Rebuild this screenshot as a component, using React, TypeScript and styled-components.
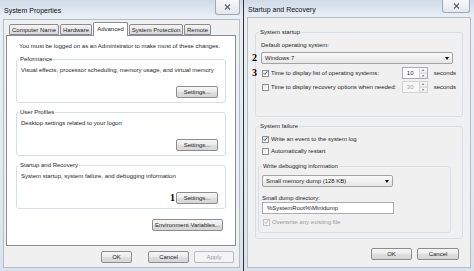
import React from "react";
import styled, { createGlobalStyle } from "styled-components";

const GlobalStyle = createGlobalStyle`
  *, *::before, *::after { box-sizing: border-box; }
  html, body { margin: 0; padding: 0; background: #fff; }
  body {
    font-family: "Liberation Sans", Arial, sans-serif;
    font-size: 6px;
    color: #1e1e1e;
  }
`;

const Screen = styled.div`
  display: flex;
  gap: 1px;
  width: 474px;
  height: 271px;
  overflow: hidden;
  background: #2e3236;
`;

const Window = styled.div<{ $width: number }>`
  width: ${(p) => p.$width}px;
  height: 271px;
  display: flex;
  flex-direction: column;
  background: linear-gradient(180deg, #cfdbe7 0%, #e8eef4 6%, #e4eaf1 60%, #d9e2eb 100%);
`;

const TitleBar = styled.div<{ $height: number }>`
  height: ${(p) => p.$height}px;
  display: flex;
  align-items: center;
  justify-content: space-between;
  padding-left: 4px;
  position: relative;
`;

const Title = styled.span`
  font-size: 7px;
  color: #111;
  margin-top: 1px;
`;

const CloseButton = styled.div<{ $width: number; $height: number; $right: number }>`
  align-self: flex-start;
  width: ${(p) => p.$width}px;
  height: ${(p) => p.$height}px;
  margin-right: ${(p) => p.$right}px;
  border: 1px solid #9eaab7;
  border-top: none;
  border-radius: 0 0 3px 3px;
  background: linear-gradient(180deg, #f5f7f9 0%, #e3e8ee 100%);
  display: flex;
  align-items: center;
  justify-content: center;
`;

const Client = styled.div`
  flex: 1;
  margin: 0 3px 3px 3px;
  background: #f0f0f0;
  border: 1px solid #b4bec9;
  display: flex;
  flex-direction: column;
`;

/* ---------- left dialog ---------- */

const LeftBody = styled.div`
  display: flex;
  flex-direction: column;
  padding: 1px 0 0 2px;
`;

const TabRow = styled.div`
  display: flex;
  align-items: flex-end;
  gap: 1px;
  height: 14px;
  padding-left: 3px;
`;

const Tab = styled.div<{ $width: number; $active?: boolean }>`
  width: ${(p) => p.$width}px;
  height: ${(p) => (p.$active ? 14 : 11)}px;
  border: 1px solid #898c95;
  border-bottom: ${(p) => (p.$active ? "none" : "1px solid #898c95")};
  border-radius: 2px 2px 0 0;
  background: ${(p) =>
    p.$active ? "#fff" : "linear-gradient(180deg, #f4f4f4 0%, #e8e8e8 50%, #dadada 100%)"};
  margin-bottom: ${(p) => (p.$active ? -1 : 0)}px;
  position: relative;
  z-index: ${(p) => (p.$active ? 1 : 0)};
  display: flex;
  align-items: center;
  justify-content: center;
  white-space: nowrap;
  padding-bottom: ${(p) => (p.$active ? 2 : 0)}px;
`;

const TabPanel = styled.div`
  width: 230px;
  height: 211px;
  background: #fff;
  border: 1px solid #898c95;
  display: flex;
  flex-direction: column;
  gap: 5px;
  padding: 6px 9px 0 9px;
`;

const Text = styled.div<{ $indent?: number; $muted?: boolean }>`
  line-height: 8px;
  white-space: nowrap;
  margin-left: ${(p) => p.$indent ?? 0}px;
  color: ${(p) => (p.$muted ? "#8a8a8a" : "inherit")};
`;

const Group = styled.fieldset`
  margin: 0;
  padding: 0 7px 4px 4px;
  border: 1px solid #d5dfe5;
  border-radius: 3px;
  display: flex;
  flex-direction: column;
  min-inline-size: 0;
`;

const Legend = styled.legend`
  padding: 0 1px;
  margin-left: -2px;
  line-height: 8px;
  white-space: nowrap;
`;

const GroupText = styled(Text)`
  margin-top: 3px;
`;

const ButtonRow = styled.div`
  display: flex;
  justify-content: flex-end;
  align-items: center;
  margin-top: 12px;
`;

const Button = styled.button<{ $width: number }>`
  width: ${(p) => p.$width}px;
  height: 12px;
  padding: 0;
  font-family: "Liberation Sans", Arial, sans-serif;
  font-size: 6px;
  line-height: 10px;
  color: #1e1e1e;
  border: 1px solid #8d8d8d;
  border-radius: 2px;
  background: linear-gradient(180deg, #f6f6f6 0%, #ebebeb 50%, #dedede 51%, #d6d6d6 100%);
  &:disabled {
    color: #9a9a9a;
    border-color: #b8bcbf;
    background: #f4f4f4;
  }
`;

const EnvButton = styled(Button)`
  align-self: flex-end;
  margin: 5px 3px 0 0;
`;

const Marker = styled.span`
  font-family: "Liberation Serif", "Times New Roman", serif;
  font-weight: bold;
  font-size: 10px;
  line-height: 10px;
  color: #000;
`;

const StepMarker = styled(Marker)`
  margin-right: 1px;
`;

const Footer = styled.div<{ $top: number; $right: number }>`
  display: flex;
  justify-content: flex-end;
  gap: 5px;
  padding: ${(p) => p.$top}px ${(p) => p.$right}px 0 0;
`;

const NarrowOk = styled(Button)`
  margin-right: 11px;
`;

/* ---------- right dialog ---------- */

const RightBody = styled.div`
  display: flex;
  flex-direction: column;
  padding: 10px 7px 0 7px;
`;

const Section = styled.fieldset<{ $height: number; $gapTop?: number }>`
  margin: ${(p) => p.$gapTop ?? 0}px 0 0 0;
  height: ${(p) => p.$height}px;
  padding: 0 6px 0 5px;
  border: 1px solid #d5dfe5;
  border-radius: 3px;
  display: flex;
  flex-direction: column;
  min-inline-size: 0;
`;

const SubGroup = styled.fieldset`
  margin: 7px 5px 0 -3px;
  height: 71px;
  padding: 0 3px 0 3px;
  border: 1px solid #d5dfe5;
  border-radius: 3px;
  display: flex;
  flex-direction: column;
  min-inline-size: 0;
`;

const SubLegend = styled(Legend)`
  margin-left: 0;
`;

const Row = styled.div<{ $top: number }>`
  display: flex;
  align-items: center;
  margin-top: ${(p) => p.$top}px;
  position: relative;
`;

const SideMarker = styled(Marker)`
  position: absolute;
  left: -9px;
  top: 50%;
  transform: translateY(-50%);
`;

const Combo = styled.div<{ $width: number }>`
  width: ${(p) => p.$width}px;
  height: 12px;
  border: 1px solid #a3a3a3;
  border-radius: 2px;
  background: linear-gradient(180deg, #fafafa 0%, #f0f0f0 50%, #e6e6e6 100%);
  display: flex;
  align-items: center;
  justify-content: space-between;
  padding: 0 3px 0 3px;
  line-height: 8px;
`;

const ComboArrow = styled.span`
  width: 0;
  height: 0;
  border-left: 2.5px solid transparent;
  border-right: 2.5px solid transparent;
  border-top: 3px solid #111;
`;

const CheckLine = styled.label<{ $width?: number; $disabled?: boolean }>`
  display: flex;
  align-items: center;
  gap: 2px;
  width: ${(p) => (p.$width ? `${p.$width}px` : "auto")};
  line-height: 8px;
  white-space: nowrap;
  color: ${(p) => (p.$disabled ? "#9a9a9a" : "inherit")};
  margin-left: 1px;
`;

const Box = styled.span<{ $disabled?: boolean }>`
  width: 7px;
  height: 7px;
  flex: none;
  border: 1px solid ${(p) => (p.$disabled ? "#c4c4c4" : "#8e8f8f")};
  background: ${(p) => (p.$disabled ? "#f4f4f4" : "linear-gradient(135deg, #e6e6e6 0%, #fff 100%)")};
  display: flex;
  align-items: center;
  justify-content: center;
`;

const Spin = styled.div<{ $disabled?: boolean }>`
  width: 26px;
  height: 12px;
  border: 1px solid ${(p) => (p.$disabled ? "#d2d2d2" : "#abadb3")};
  background: ${(p) => (p.$disabled ? "#f7f7f7" : "#fff")};
  color: ${(p) => (p.$disabled ? "#a0a0a0" : "inherit")};
  display: flex;
  align-items: center;
  justify-content: space-between;
  padding-left: 4px;
  margin-right: 6px;
`;

const SpinButtons = styled.div`
  width: 8px;
  height: 10px;
  display: flex;
  flex-direction: column;
  border-left: 1px solid #d8d8d8;
`;

const SpinHalf = styled.div<{ $down?: boolean }>`
  flex: 1;
  display: flex;
  align-items: center;
  justify-content: center;
  background: linear-gradient(180deg, #f8f8f8, #e8e8e8);
  border-top: ${(p) => (p.$down ? "1px solid #dcdcdc" : "none")};
  &::after {
    content: "";
    border-left: 1.5px solid transparent;
    border-right: 1.5px solid transparent;
    ${(p) => (p.$down ? "border-top: 2px solid #7a7a7a;" : "border-bottom: 2px solid #7a7a7a;")}
  }
`;

const TextBox = styled.div<{ $width: number }>`
  width: ${(p) => p.$width}px;
  height: 12px;
  border: 1px solid #abadb3;
  background: #fff;
  padding-left: 4px;
  display: flex;
  align-items: center;
  line-height: 8px;
  white-space: nowrap;
`;

const CloseGlyph = () => (
  <svg width="7" height="6" viewBox="0 0 7 6">
    <path d="M1 0.5 L6 5.5 M6 0.5 L1 5.5" stroke="#58626d" strokeWidth="1.1" fill="none" />
  </svg>
);

const Check: React.FC<{ checked?: boolean; disabled?: boolean }> = ({ checked, disabled }) => (
  <Box $disabled={disabled}>
    {checked && (
      <svg width="6" height="6" viewBox="0 0 6 6">
        <path
          d="M0.8 3.2 L2.3 4.8 L5.3 0.8"
          stroke={disabled ? "#b0b0b0" : "#3a4d6b"}
          strokeWidth="1.1"
          fill="none"
        />
      </svg>
    )}
  </Box>
);

const SpinBox: React.FC<{ value: string; disabled?: boolean }> = ({ value, disabled }) => (
  <Spin $disabled={disabled}>
    {value}
    <SpinButtons>
      <SpinHalf />
      <SpinHalf $down />
    </SpinButtons>
  </Spin>
);

const tabs = [
  { label: "Computer Name", width: 50 },
  { label: "Hardware", width: 32 },
  { label: "Advanced", width: 35, active: true },
  { label: "System Protection", width: 54 },
  { label: "Remote", width: 27 },
];

const App: React.FC = () => {
  return (
    <>
      <GlobalStyle />
      <Screen>
        <Window $width={243}>
          <TitleBar $height={19}>
            <Title>System Properties</Title>
            <CloseButton $width={25} $height={15} $right={3}>
              <CloseGlyph />
            </CloseButton>
          </TitleBar>
          <Client>
            <LeftBody>
              <TabRow>
                {tabs.map((t) => (
                  <Tab key={t.label} $width={t.width} $active={t.active}>
                    {t.label}
                  </Tab>
                ))}
              </TabRow>
              <TabPanel>
                <Text $indent={3}>
                  You must be logged on as an Administrator to make most of these changes.
                </Text>
                <Group>
                  <Legend>Peformance</Legend>
                  <GroupText>Visual effects, processor scheduling, memory usage, and virtual memory</GroupText>
                  <ButtonRow>
                    <Button $width={42}>Settings...</Button>
                  </ButtonRow>
                </Group>
                <Group>
                  <Legend>User Profiles</Legend>
                  <GroupText>Desktop settings related to your logon</GroupText>
                  <ButtonRow>
                    <Button $width={42}>Settings...</Button>
                  </ButtonRow>
                </Group>
                <Group>
                  <Legend>Startup and Recovery</Legend>
                  <GroupText>System startup, system failure, and debugging information</GroupText>
                  <ButtonRow>
                    <StepMarker>1</StepMarker>
                    <Button $width={42}>Settings...</Button>
                  </ButtonRow>
                </Group>
                <EnvButton $width={71}>Environment Variables...</EnvButton>
              </TabPanel>
            </LeftBody>
            <Footer $top={5} $right={5}>
              <NarrowOk $width={31}>OK</NarrowOk>
              <Button $width={41}>Cancel</Button>
              <Button $width={40} disabled>
                Apply
              </Button>
            </Footer>
          </Client>
        </Window>

        <Window $width={230}>
          <TitleBar $height={17}>
            <Title>Startup and Recovery</Title>
            <CloseButton $width={28} $height={13} $right={4}>
              <CloseGlyph />
            </CloseButton>
          </TitleBar>
          <Client>
            <RightBody>
              <Section $height={89}>
                <Legend>System startup</Legend>
                <Text style={{ marginTop: 5 }}>Default operating system:</Text>
                <Row $top={3}>
                  <SideMarker>2</SideMarker>
                  <Combo $width={192}>
                    Windows 7
                    <ComboArrow />
                  </Combo>
                </Row>
                <Row $top={3}>
                  <SideMarker>3</SideMarker>
                  <CheckLine $width={141}>
                    <Check checked />
                    Time to display list of operating systems:
                  </CheckLine>
                  <SpinBox value="10" />
                  seconds
                </Row>
                <Row $top={2}>
                  <CheckLine $width={141}>
                    <Check />
                    Time to display recovery options when needed:
                  </CheckLine>
                  <SpinBox value="30" disabled />
                  seconds
                </Row>
              </Section>

              <Section $height={117} $gapTop={5}>
                <Legend>System failure</Legend>
                <Row $top={5}>
                  <CheckLine>
                    <Check checked />
                    Write an event to the system log
                  </CheckLine>
                </Row>
                <Row $top={4}>
                  <CheckLine>
                    <Check />
                    Automatically restart
                  </CheckLine>
                </Row>
                <SubGroup>
                  <SubLegend>Write debugging information</SubLegend>
                  <Row $top={5}>
                    <Combo $width={131}>
                      Small memory dump (128 KB)
                      <ComboArrow />
                    </Combo>
                  </Row>
                  <Text style={{ marginTop: 7 }}>Small dump directory:</Text>
                  <TextBox $width={132}>%SystemRoot%\Minidump</TextBox>
                  <Row $top={4}>
                    <CheckLine $disabled>
                      <Check checked disabled />
                      Overwrite any existing file
                    </CheckLine>
                  </Row>
                </SubGroup>
              </Section>
            </RightBody>
            <Footer $top={9} $right={11}>
              <Button $width={41}>OK</Button>
              <Button $width={42}>Cancel</Button>
            </Footer>
          </Client>
        </Window>
      </Screen>
    </>
  );
};

export default App;
